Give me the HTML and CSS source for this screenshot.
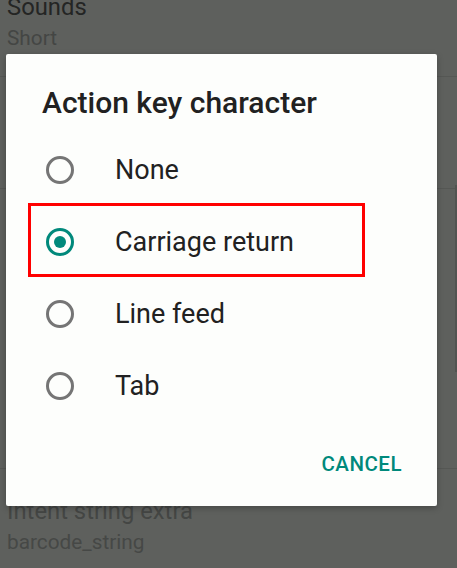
FILE: index.html
```html
<!DOCTYPE html>
<html>
<head>
<meta charset="utf-8">
<link rel="stylesheet" href="styles.css">
</head>
<body>
<div class="screen">
  <div class="list">
    <div class="pref">
      <div class="pref-title">Sounds</div>
      <div class="pref-summary">Short</div>
    </div>
    <div class="pref pref-hidden"></div>
    <div class="pref pref-tall"></div>
    <div class="pref pref-last">
      <div class="pref-title">Intent string extra</div>
      <div class="pref-summary">barcode_string</div>
    </div>
  </div>
  <div class="scrollbar"></div>

  <div class="dialog">
    <div class="dialog-title">Action key character</div>
    <div class="options">
      <div class="option"><span class="radio"></span><span class="label">None</span></div>
      <div class="option"><span class="radio checked"></span><span class="label">Carriage return</span></div>
      <div class="option"><span class="radio"></span><span class="label">Line feed</span></div>
      <div class="option"><span class="radio"></span><span class="label">Tab</span></div>
    </div>
    <div class="actions">
      <span class="btn">CANCEL</span>
    </div>
    <div class="highlight"></div>
  </div>
</div>
</body>
</html>
```

FILE: styles.css
```css
html, body {
  margin: 0;
  padding: 0;
}
body {
  background: #5e605d;
  font-family: Roboto, "Noto Sans", "Liberation Sans", sans-serif;
  width: 457px;
  height: 568px;
  overflow: hidden;
}
.screen {
  position: relative;
  width: 457px;
  height: 568px;
  overflow: hidden;
}
.list {
  margin-top: -35px;
}
.pref {
  padding: 27px 7px 23px;
  border-bottom: 1px solid #555754;
}
.pref-hidden {
  height: 61px;
}
.pref-tall {
  height: 229px;
}
.pref-last {
  border-bottom: none;
}
.pref-title {
  font-size: 23.8px;
  line-height: 30px;
  color: #242524;
}
.pref-summary {
  margin-top: 1px;
  font-size: 20.8px;
  line-height: 30px;
  color: #444644;
}
.pref-last .pref-title {
  color: #444644;
}
.pref-last .pref-summary {
  color: #464846;
}
.scrollbar {
  position: absolute;
  right: 0;
  top: 185px;
  width: 2px;
  height: 187px;
  background: #525451;
}
.dialog {
  position: absolute;
  left: 6px;
  top: 54px;
  width: 431px;
  height: 452px;
  background: #fdfefc;
  border-radius: 2px;
  box-shadow: 0 2px 6px rgba(0, 0, 0, 0.25);
}
.dialog-title {
  padding: 19px 36px 0;
  height: 61px;
  line-height: 60px;
  font-size: 30px;
  font-weight: 500;
  color: #212121;
}
.option {
  height: 72px;
  display: flex;
  align-items: center;
  padding-left: 40px;
  gap: 41px;
}
.radio {
  width: 28px;
  height: 28px;
  box-sizing: border-box;
  border: 3px solid #757575;
  border-radius: 50%;
  display: flex;
  align-items: center;
  justify-content: center;
  flex: none;
}
.radio.checked {
  border-color: #00897b;
}
.radio.checked::after {
  content: "";
  width: 12px;
  height: 12px;
  border-radius: 50%;
  background: #00897b;
}
.label {
  font-size: 27px;
  color: #212121;
}
.actions {
  height: 84px;
  display: flex;
  justify-content: flex-end;
  align-items: center;
  padding-right: 35px;
}
.btn {
  font-size: 20.5px;
  font-weight: 500;
  letter-spacing: 0.5px;
  color: #00897b;
}
.highlight {
  position: absolute;
  left: 22px;
  top: 149px;
  width: 337px;
  height: 74px;
  box-sizing: border-box;
  border: 3px solid #ff0000;
}
```
